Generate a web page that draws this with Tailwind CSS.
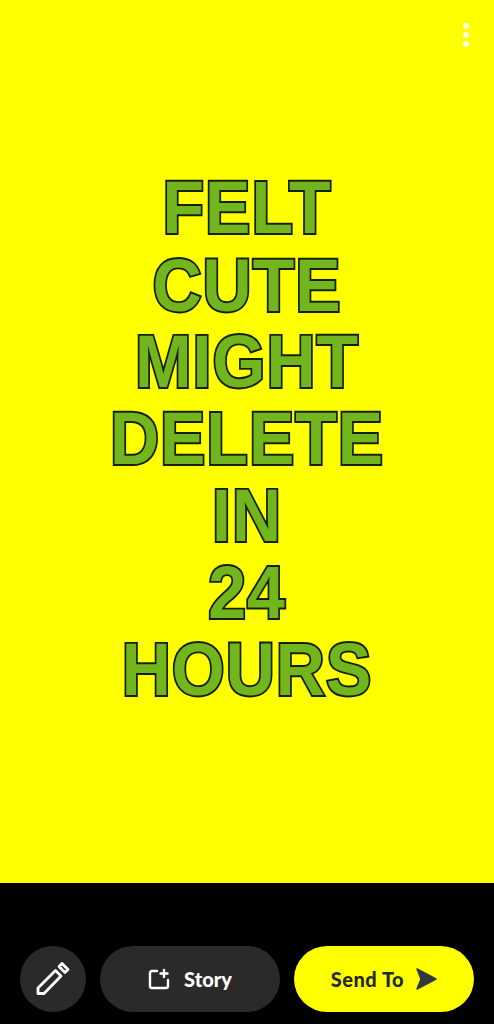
<!DOCTYPE html>
<html lang="en">
<head>
  <meta charset="UTF-8" />
  <meta name="viewport" content="width=device-width, initial-scale=1.0" />
  <title>Snap preview</title>
  <script src="https://cdn.jsdelivr.net/npm/@tailwindcss/browser@4"></script>
</head>
<body class="bg-black w-[494px] h-[1024px] overflow-hidden font-['Liberation_Sans',sans-serif]">
  <div class="flex flex-col h-full">
    <!-- snap area -->
    <div class="relative h-[883px] bg-[#ffff00] pt-[169px]">
      <div class="absolute top-[23px] right-[25px] flex flex-col gap-[3px]">
        <span class="w-[6px] h-[6px] rounded-full bg-[#fffde0]"></span>
        <span class="w-[6px] h-[6px] rounded-full bg-[#fffde0]"></span>
        <span class="w-[6px] h-[6px] rounded-full bg-[#fffde0]"></span>
      </div>
      <div class="flex flex-col items-center origin-top scale-y-[1.09] text-[68px] leading-[70.6px] tracking-[1px] font-bold text-[#72b51c] [-webkit-text-stroke:3.5px_#14210f] [paint-order:stroke_fill]">
        <div>FELT</div>
        <div>CUTE</div>
        <div>MIGHT</div>
        <div>DELETE</div>
        <div>IN</div>
        <div>24</div>
        <div>HOURS</div>
      </div>
    </div>
    <!-- bottom bar -->
    <div class="flex-1 flex items-end gap-[14px] px-[20px] pb-[12px]">
      <button class="w-[66px] h-[66px] rounded-full bg-[#2a2a2a] flex items-center justify-center">
        <svg class="w-[34px] h-[36px]" viewBox="0 0 34 36" fill="none" stroke="#fff" stroke-width="2.8" stroke-linejoin="round">
          <path d="M2 27 L19.5 9.5 L25 15 L8 32.5 L2 32.5 Z" />
          <path d="M23 5.5 L26 2.5 L32 8.5 L29 11.5 Z" />
        </svg>
      </button>
      <button class="w-[180px] h-[66px] rounded-full bg-[#2a2a2a] flex items-center justify-center gap-[14px] text-white text-[20px] font-black font-['Lato',sans-serif]">
        <svg class="w-[22px] h-[22px]" viewBox="0 0 22 22" fill="none" stroke="#fff" stroke-width="2.4" stroke-linecap="round" stroke-linejoin="round">
          <path d="M9 3 H4 Q2 3 2 5 V18 Q2 20 4 20 H18 Q20 20 20 18 V12" />
          <path d="M16 2 V9 M12.5 5.5 H19.5" />
        </svg>
        <span>Story</span>
      </button>
      <button class="w-[180px] h-[66px] rounded-full bg-[#ffff00] flex items-center justify-center gap-[11px] text-[#26292c] text-[20px] font-black font-['Lato',sans-serif] tracking-[0.5px]">
        <span>Send To</span>
        <svg class="w-[22px] h-[24px]" viewBox="0 0 22 24" fill="#33383d" stroke="#33383d" stroke-width="1.5" stroke-linejoin="round">
          <path d="M2 2 L21 12 L2 22 L6 12 Z" />
        </svg>
      </button>
    </div>
  </div>
</body>
</html>
